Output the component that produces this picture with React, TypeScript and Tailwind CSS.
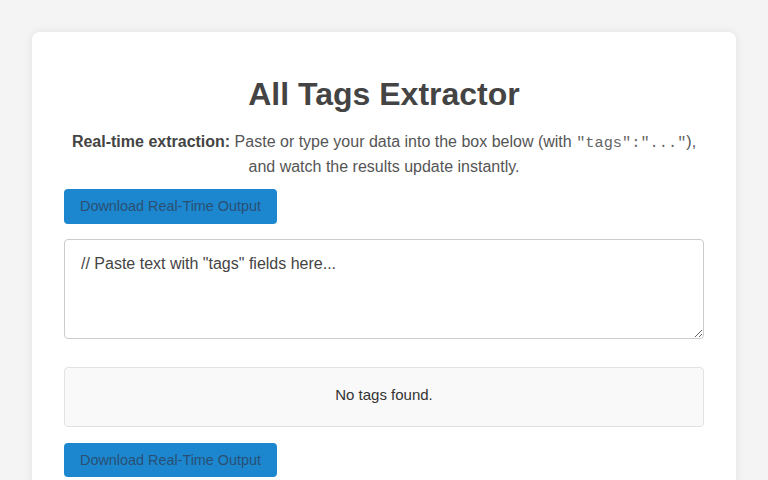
import React from "react";

function DownloadButton() {
  return (
    <button
      type="button"
      className="block rounded-[4px] bg-[#1c87cf] px-4 py-[9px] text-[14.4px] leading-[16.5px] text-[#2a4f73] font-['Liberation_Sans',Arial,sans-serif]"
    >
      Download Real-Time Output
    </button>
  );
}

export default function App() {
  return (
    <div className="min-h-[480px] bg-[#f4f4f4] px-8 pt-8 pb-8 font-['Liberation_Sans',Arial,sans-serif]">
      <div className="rounded-[8px] bg-white px-8 pt-[44px] pb-8 shadow-[0_0_10px_rgba(0,0,0,0.08)]">
        <h1 className="text-center text-[32px] leading-[37px] font-bold text-[#444]">
          All Tags Extractor
        </h1>
        <p className="mt-[17px] text-center text-[16px] leading-[24px] text-[#555]">
          <strong className="font-bold text-[#444]">Real-time extraction:</strong> Paste or type your data into the box below (with{" "}
          <code className="font-['Liberation_Mono','Courier_New',monospace] text-[15.3px] text-[#666]">"tags":"..."</code>), and watch the results update instantly.
        </p>
        <div className="mt-[10px]">
          <DownloadButton />
        </div>
        <textarea
          className="mt-[15px] block h-[100px] w-full rounded-[4px] border border-[#ccc] bg-white px-4 py-[15px] text-[16px] leading-[18px] text-[#444] placeholder:text-[#444] outline-none font-['Liberation_Sans',Arial,sans-serif]"
          placeholder={'// Paste text with "tags" fields here...'}
        />
        <div className="mt-[28px] h-[60px] rounded-[4px] border border-[#e2e2e2] bg-[#f9f9f9] pt-[18px] text-center text-[15px] leading-[17px] text-[#333]">
          No tags found.
        </div>
        <div className="mt-[16px]">
          <DownloadButton />
        </div>
      </div>
    </div>
  );
}
